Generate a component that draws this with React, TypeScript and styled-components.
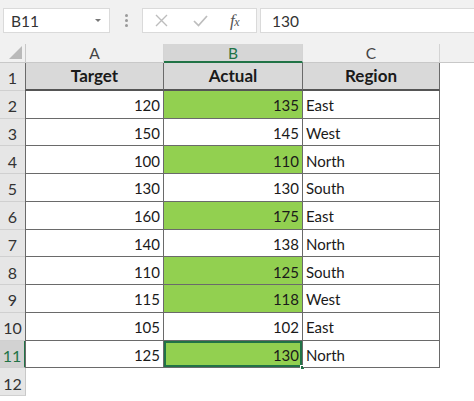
import React from "react";
import styled, { createGlobalStyle, css } from "styled-components";

const Global = createGlobalStyle`
  html, body { margin: 0; padding: 0; background: #ffffff; }
  body { font-family: Lato, "Open Sans", sans-serif; width: 474px; height: 401px; overflow: hidden; }
`;

const Page = styled.div`
  width: 474px;
  height: 401px;
  display: flex;
  flex-direction: column;
  overflow: hidden;
`;

const Toolbar = styled.div`
  height: 44px;
  background: #f1f1f1;
  display: flex;
  align-items: flex-start;
  padding: 8px 0 0 3px;
  box-sizing: border-box;
`;

const Box = styled.div<{ $w: number; $ml?: number }>`
  width: ${(p) => p.$w}px;
  height: 25px;
  margin-left: ${(p) => p.$ml ?? 0}px;
  background: #ffffff;
  border: 1px solid #dadada;
  box-sizing: border-box;
  display: flex;
  align-items: center;
  font-size: 15.5px;
  color: #333;
  flex-shrink: 0;
`;

const NameText = styled.span`
  padding-left: 7px;
  flex: 1;
`;

const Caret = styled.span`
  width: 0;
  height: 0;
  border-left: 3px solid transparent;
  border-right: 3px solid transparent;
  border-top: 3px solid #777;
  margin-right: 8px;
`;

const Dots = styled.div`
  width: 32px;
  height: 25px;
  display: flex;
  flex-direction: column;
  align-items: center;
  justify-content: center;
  gap: 2px;
  flex-shrink: 0;
  span {
    width: 3px;
    height: 3px;
    background: #9a9a9a;
    border-radius: 50%;
  }
`;

const FxIcons = styled.div`
  display: flex;
  align-items: center;
  width: 100%;
  padding-left: 11px;
  box-sizing: border-box;
`;

const IconSlot = styled.span<{ $w: number }>`
  width: ${(p) => p.$w}px;
  display: flex;
  align-items: center;
`;

const Fx = styled.span`
  font-family: "Liberation Serif", "DejaVu Serif", serif;
  font-style: italic;
  font-size: 17px;
  color: #555;
  letter-spacing: -0.5px;
  span { font-size: 12px; }
`;

const FormulaText = styled.span`
  padding-left: 11px;
`;

const Grid = styled.div`
  display: grid;
  grid-template-columns: 26px 138px 139px 137px 1fr;
  grid-template-rows: 19px repeat(12, 27.75px);
  background: #ffffff;
`;

const ColHead = styled.div<{ $sel?: boolean; $last?: boolean }>`
  background: #f1f1f1;
  border-right: 1px solid #d4d4d4;
  border-bottom: 1px solid #c8c8c8;
  box-sizing: border-box;
  display: flex;
  align-items: center;
  justify-content: center;
  font-size: 15.5px;
  color: #444;
  ${(p) =>
    p.$sel &&
    css`
      background: #d6d6d6;
      color: #217346;
      border-bottom: 2px solid #217346;
    `}
  ${(p) =>
    p.$last &&
    css`
      border-right: none;
    `}
`;

const Corner = styled.div`
  background: #f1f1f1;
  border-right: 1px solid #c8c8c8;
  border-bottom: 1px solid #c8c8c8;
  box-sizing: border-box;
  position: relative;
  &::after {
    content: "";
    position: absolute;
    right: 3px;
    bottom: 3px;
    width: 0;
    height: 0;
    border-left: 13px solid transparent;
    border-bottom: 13px solid #b9b9b9;
  }
`;

const RowHead = styled.div<{ $sel?: boolean }>`
  background: #e6e6e6;
  border-right: 1px solid #c8c8c8;
  border-bottom: 1px solid #d0d0d0;
  box-sizing: border-box;
  display: flex;
  align-items: center;
  justify-content: center;
  padding-top: 3px;
  font-size: 16px;
  color: #333;
  ${(p) =>
    p.$sel &&
    css`
      background: #d2d2d2;
      color: #217346;
      border-right: 2px solid #217346;
    `}
`;

const Cell = styled.div<{
  $align?: "left" | "right" | "center";
  $head?: boolean;
  $green?: boolean;
  $sel?: boolean;
  $first?: boolean;
}>`
  box-sizing: border-box;
  border-right: 1px solid #6a6a6a;
  border-bottom: 1px solid #6a6a6a;
  ${(p) => p.$first && css`border-left: 1px solid #6a6a6a; margin-left: -1px;`}
  display: flex;
  align-items: center;
  padding: 2px 3px 0 3px;
  justify-content: ${(p) =>
    p.$align === "right" ? "flex-end" : p.$align === "center" ? "center" : "flex-start"};
  font-size: 15px;
  color: #1a1a1a;
  background: ${(p) => (p.$head ? "#d9d9d9" : p.$green ? "#92d050" : "#ffffff")};
  ${(p) =>
    p.$head &&
    css`
      font-weight: 700;
      font-size: 17px;
      border-bottom: 2px solid #555;
      padding-top: 0;
    `}
  position: relative;
  ${(p) =>
    p.$sel &&
    css`
      box-shadow: inset 0 0 0 2px #217346;
      &::after {
        content: "";
        position: absolute;
        right: -3px;
        bottom: -3px;
        width: 5px;
        height: 5px;
        background: #217346;
        border: 1px solid #fff;
        box-sizing: border-box;
      }
    `}
`;

const Empty = styled.div`
  background: #ffffff;
  box-sizing: border-box;
`;

const rows: [number, number, string][] = [
  [120, 135, "East"],
  [150, 145, "West"],
  [100, 110, "North"],
  [130, 130, "South"],
  [160, 175, "East"],
  [140, 138, "North"],
  [110, 125, "South"],
  [115, 118, "West"],
  [105, 102, "East"],
  [125, 130, "North"],
];

const XIcon = () => (
  <svg width="15" height="15" viewBox="0 0 15 15">
    <path d="M2 2 L13 13 M13 2 L2 13" stroke="#bdbdbd" strokeWidth="1.4" fill="none" />
  </svg>
);

const CheckIcon = () => (
  <svg width="17" height="15" viewBox="0 0 17 15">
    <path d="M2 8 L6.5 12.5 L15 3" stroke="#bdbdbd" strokeWidth="1.7" fill="none" />
  </svg>
);

export default function App() {
  return (
    <Page>
      <Global />
      <Toolbar>
        <Box $w={107}>
          <NameText>B11</NameText>
          <Caret />
        </Box>
        <Dots>
          <span />
          <span />
          <span />
        </Dots>
        <Box $w={115}>
          <FxIcons>
            <IconSlot $w={38}>
              <XIcon />
            </IconSlot>
            <IconSlot $w={38}>
              <CheckIcon />
            </IconSlot>
            <Fx>
              f<span>x</span>
            </Fx>
          </FxIcons>
        </Box>
        <Box $w={220} $ml={3}>
          <FormulaText>130</FormulaText>
        </Box>
      </Toolbar>
      <Grid>
        <Corner />
        <ColHead>A</ColHead>
        <ColHead $sel>B</ColHead>
        <ColHead>C</ColHead>
        <ColHead $last />

        <RowHead>1</RowHead>
        <Cell $head $align="center" $first>
          Target
        </Cell>
        <Cell $head $align="center">
          Actual
        </Cell>
        <Cell $head $align="center">
          Region
        </Cell>
        <Empty />

        {rows.map(([t, a, r], i) => {
          const n = i + 2;
          const sel = n === 11;
          return (
            <React.Fragment key={n}>
              <RowHead $sel={sel}>{n}</RowHead>
              <Cell $align="right" $first>
                {t}
              </Cell>
              <Cell $align="right" $green={a > t} $sel={sel}>
                {a}
              </Cell>
              <Cell $align="left">{r}</Cell>
              <Empty />
            </React.Fragment>
          );
        })}

        <RowHead>12</RowHead>
        <Empty />
        <Empty />
        <Empty />
        <Empty />
      </Grid>
    </Page>
  );
}
